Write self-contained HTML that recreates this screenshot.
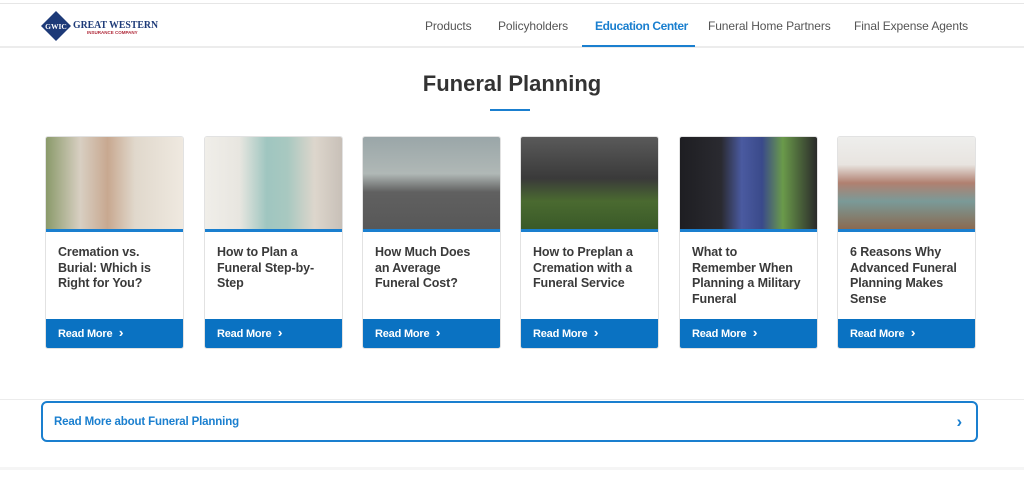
<!DOCTYPE html>
<html><head><style>
*{margin:0;padding:0;box-sizing:border-box}
body{width:1024px;height:485px;background:#fff;font-family:"Liberation Sans",sans-serif;position:relative;overflow:hidden}
.topline{position:absolute;left:0;right:0;top:3px;height:1px;background:#e6e6e6}
.hdr{position:absolute;left:0;right:0;top:46px;height:2px;background:#ececec}
.nav{position:absolute;top:19px;font-size:12px;color:#555;letter-spacing:-0.1px}
.nav.a{color:#1a7fcf;font-weight:bold;letter-spacing:-0.4px}
.ul{position:absolute;left:582px;width:113px;top:45px;height:2px;background:#1a7fcf}
h1{position:absolute;top:71px;left:0;width:1024px;text-align:center;font-size:22px;color:#333;font-weight:bold}
.bar{position:absolute;left:490px;top:109px;width:40px;height:2px;background:#1a7fcf}
.card{position:absolute;top:136px;width:139px;height:213px;border:1px solid #e2e2e2;border-radius:3px;overflow:hidden;background:#fff}
.img{position:absolute;left:0;top:0;width:100%;height:92px}
.img:after{content:"";position:absolute;left:0;right:0;bottom:-3px;height:3px;background:#1a7fcf}
.t{position:absolute;left:12px;top:108px;width:130px;white-space:nowrap;font-size:12.5px;line-height:15.7px;font-weight:bold;color:#3a3a3a;letter-spacing:-0.1px}
.btn{position:absolute;left:0;bottom:0;width:100%;height:29px;background:#0a72c2;color:#fff;font-size:11px;font-weight:bold;padding:8px 12px;letter-spacing:-0.2px}
.btn b{display:inline-block;margin-left:7px;font-size:13px;line-height:11px;transform:scaleX(1.1)}
.sep{position:absolute;left:0;right:0;top:399px;height:1px;background:#ececec}
.box{position:absolute;left:41px;top:401px;width:937px;height:41px;border:2px solid #1a7fcf;border-radius:6px;color:#1a7fcf;font-size:11.5px;font-weight:bold;padding:13px 11px;letter-spacing:-0.15px}
.sep2{position:absolute;left:0;right:0;top:467px;height:3px;background:#f5f5f5}
</style></head><body>
<div class="topline"></div>
<svg style="position:absolute;left:41px;top:10px" width="120" height="32" viewBox="0 0 120 32">
<polygon points="15,1 30,16 15,31 0,16" fill="#1d3a78"/>
<text x="15" y="19" text-anchor="middle" font-family="Liberation Serif" font-size="7.5" font-weight="bold" fill="#fff">GWIC</text>
<text x="32" y="18" font-family="Liberation Serif" font-size="11" font-weight="bold" fill="#1d3a78" textLength="85" lengthAdjust="spacingAndGlyphs">GREAT WESTERN</text>
<text x="46" y="24" font-family="Liberation Sans" font-size="4.5" font-weight="bold" fill="#b02a3a">INSURANCE COMPANY</text>
</svg>
<div class="nav" style="left:425px">Products</div>
<div class="nav" style="left:498px">Policyholders</div>
<div class="nav a" style="left:595px">Education Center</div>
<div class="nav" style="left:708px">Funeral Home Partners</div>
<div class="nav" style="left:854px">Final Expense Agents</div>
<div class="hdr"></div><div class="ul"></div>
<h1>Funeral Planning</h1><div class="bar"></div>

<div class="card" style="left:45px"><div class="img" style="background:linear-gradient(90deg,#8a9a6a 0%,#d8cfc2 25%,#c8a890 45%,#e0d8cc 65%,#efe9e0 100%)"></div><div class="t">Cremation vs.<br>Burial: Which is<br>Right for You?</div><div class="btn">Read More<b>›</b></div></div>
<div class="card" style="left:204px"><div class="img" style="background:linear-gradient(90deg,#f0eee9 0%,#e8e6e0 25%,#9fc6c0 45%,#a8c8c0 60%,#ddd6cc 80%,#c8c0b8 100%)"></div><div class="t">How to Plan a<br>Funeral Step-by-<br>Step</div><div class="btn">Read More<b>›</b></div></div>
<div class="card" style="left:362px"><div class="img" style="background:linear-gradient(180deg,#9aa6a8 0%,#b0b8b6 40%,#606060 60%,#585858 100%)"></div><div class="t">How Much Does<br>an Average<br>Funeral Cost?</div><div class="btn">Read More<b>›</b></div></div>
<div class="card" style="left:520px"><div class="img" style="background:linear-gradient(180deg,#5a5a5a 0%,#3a3a3a 45%,#4a6a30 70%,#3a5a28 100%)"></div><div class="t">How to Preplan a<br>Cremation with a<br>Funeral Service</div><div class="btn">Read More<b>›</b></div></div>
<div class="card" style="left:679px"><div class="img" style="background:linear-gradient(90deg,#1e1e22 0%,#2a2a30 30%,#4a5aa0 45%,#3a4a8a 60%,#6a9a4a 75%,#2a2a2a 100%)"></div><div class="t">What to<br>Remember When<br>Planning a Military<br>Funeral</div><div class="btn">Read More<b>›</b></div></div>
<div class="card" style="left:837px"><div class="img" style="background:linear-gradient(180deg,#eeeeec 0%,#e8e4e0 30%,#b08070 50%,#7a9a98 70%,#8a6a50 100%)"></div><div class="t">6 Reasons Why<br>Advanced Funeral<br>Planning Makes<br>Sense</div><div class="btn">Read More<b>›</b></div></div>

<div class="sep"></div>
<div class="box">Read More about Funeral Planning<span style="position:absolute;right:14px;top:9px;font-size:17px">›</span></div>
<div class="sep2"></div>
</body></html>
